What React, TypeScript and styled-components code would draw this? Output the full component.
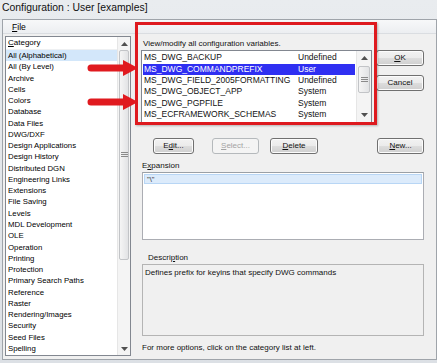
import React from "react";
import styled, { createGlobalStyle } from "styled-components";

const GlobalStyle = createGlobalStyle`
  html, body { margin: 0; padding: 0; background: #dfe3e8; }
  body { font-family: "Liberation Sans", Arial, sans-serif; color: #000; }
  * { box-sizing: border-box; }
`;

const Window = styled.div`
  position: relative;
  width: 437px;
  height: 363px;
  background: linear-gradient(#e9ecef, #dce0e5);
  display: flex;
  flex-direction: column;
  overflow: hidden;
`;

const TitleBar = styled.div`
  height: 19px;
  padding: 1px 0 0 2px;
  font-size: 10.4px;
  line-height: 14px;
  color: #111;
`;

const Client = styled.div`
  margin-left: 2px;
  width: 435px;
  height: 341px;
  background: #f0f0f0;
  border: 1px solid #9fa4aa;
  display: flex;
  flex-direction: column;
`;

const MenuBar = styled.div`
  height: 14px;
  padding-left: 9px;
  font-size: 8.6px;
  line-height: 14px;
  background: linear-gradient(#f7f8f9, #eceef1);
  border-bottom: 1px solid #dadde1;
`;

const Body = styled.div`
  flex: 1;
  display: flex;
  padding: 2px 0 0 2px;
`;

const CategoryBox = styled.div`
  width: 126px;
  height: 320px;
  background: #fff;
  border: 1px solid #828790;
  display: flex;
`;

const CategoryItems = styled.div`
  flex: 1;
  display: flex;
  flex-direction: column;
`;

const CategoryHeader = styled.div`
  height: 13px;
  padding-left: 2px;
  font-size: 8px;
  line-height: 12px;
  border-bottom: 1px solid #eef0f2;
`;

const CategoryRow = styled.div<{ $selected?: boolean }>`
  height: 11.27px;
  padding-left: 2px;
  font-size: 7.8px;
  line-height: 11.27px;
  white-space: nowrap;
  background: ${(p) => (p.$selected ? "#d3e7fa" : "transparent")};
`;

const ScrollBar = styled.div<{ $w: number }>`
  width: ${(p) => p.$w}px;
  display: flex;
  flex-direction: column;
  background: #f4f4f4;
  border-left: 1px solid #e6e6e6;
`;

const ScrollArrowBox = styled.div<{ $h: number }>`
  height: ${(p) => p.$h}px;
  display: flex;
  align-items: center;
  justify-content: center;
`;

const Thumb = styled.div<{ $h: number; $top: number }>`
  margin: ${(p) => p.$top}px 1px 0;
  height: ${(p) => p.$h}px;
  border: 1px solid #c2c4c7;
  border-radius: 2px;
  background: linear-gradient(to right, #f5f5f5, #e2e3e5);
  display: flex;
  align-items: center;
  justify-content: center;
`;

const Track = styled.div`
  flex: 1;
`;

const RightPane = styled.div`
  margin-left: 10px;
  padding-top: 1px;
  display: flex;
  flex-direction: column;
`;

const TopRow = styled.div`
  display: flex;
  align-items: flex-start;
`;

const VarsColumn = styled.div`
  width: 231px;
  display: flex;
  flex-direction: column;
`;

const Label = styled.div<{ $indent?: number }>`
  height: 13px;
  padding-left: ${(p) => p.$indent ?? 2}px;
  font-size: 8px;
  line-height: 13px;
  white-space: nowrap;
  color: #111;
`;

const VarList = styled.div`
  height: 73px;
  background: #fff;
  border: 1px solid #828790;
  display: flex;
`;

const VarRows = styled.div`
  flex: 1;
  padding: 1.4px 1px 0 1px;
  display: flex;
  flex-direction: column;
`;

const VarRow = styled.div<{ $selected?: boolean }>`
  height: 11.3px;
  display: flex;
  font-size: 8.5px;
  line-height: 11.3px;
  white-space: nowrap;
  background: ${(p) => (p.$selected ? "#2f2ff2" : "transparent")};
  color: ${(p) => (p.$selected ? "#fff" : "#111")};
`;

const VarName = styled.span`
  width: 155px;
  padding-left: 1px;
`;

const VarValue = styled.span`
  flex: 1;
`;

const SideButtons = styled.div`
  margin-left: 4px;
  padding-top: 13px;
  display: flex;
  flex-direction: column;
  gap: 9px;
`;

const Button = styled.div<{ $w: number; $ml?: number; $disabled?: boolean }>`
  width: ${(p) => p.$w}px;
  height: 16px;
  margin-left: ${(p) => (p.$ml === undefined ? 0 : `${p.$ml}px`)};
  border: 1px solid ${(p) => (p.$disabled ? "#b5b9bc" : "#707070")};
  border-radius: 3px;
  background: ${(p) =>
    p.$disabled
      ? "#f4f4f4"
      : "linear-gradient(#f2f2f2 0%, #ebebeb 50%, #dddddd 51%, #cfcfcf 100%)"};
  box-shadow: inset 0 0 0 1px ${(p) => (p.$disabled ? "#f4f4f4" : "#fcfcfc")};
  font-size: 8px;
  line-height: 14px;
  text-align: center;
  color: ${(p) => (p.$disabled ? "#a3a3a3" : "#111")};
`;

const ActionRow = styled.div`
  margin-top: 15px;
  width: 283px;
  display: flex;
  & > :last-child {
    margin-left: auto;
  }
`;

const ExpansionBox = styled.div`
  margin-left: 1px;
  width: 282px;
  height: 68px;
  background: #fff;
  border: 1px solid #abadb3;
  border-top-color: #9aa0a6;
  padding: 1px;
`;

const ExpansionRow = styled.div`
  height: 10px;
  padding-left: 2px;
  font-size: 7.5px;
  line-height: 9px;
  background: #dcebfb;
  border: 1px solid #b8d6f5;
  color: #333;
`;

const DescriptionBox = styled.div`
  margin-left: 1px;
  width: 282px;
  height: 72px;
  background: #f0f0f0;
  border: 1px solid #b4b4b4;
  padding: 2px 2px;
  font-size: 8px;
  line-height: 11px;
  color: #111;
`;

const Footer = styled.div`
  margin-top: 6px;
  padding-left: 1px;
  font-size: 8px;
  line-height: 12px;
  color: #111;
`;

const RedFrame = styled.div`
  position: absolute;
  left: 135px;
  top: 22px;
  width: 242px;
  height: 103px;
  border: 3px solid #de1a1f;
  box-shadow: 1px 1px 2px rgba(0, 0, 0, 0.25);
  pointer-events: none;
`;

const ArrowWrap = styled.svg<{ $top: number }>`
  position: absolute;
  left: 87px;
  top: ${(p) => p.$top}px;
`;

const Spacer = styled.div<{ $h: number }>`
  height: ${(p) => p.$h}px;
`;

const categories = [
  "All (Alphabetical)",
  "All (By Level)",
  "Archive",
  "Cells",
  "Colors",
  "Database",
  "Data Files",
  "DWG/DXF",
  "Design Applications",
  "Design History",
  "Distributed DGN",
  "Engineering Links",
  "Extensions",
  "File Saving",
  "Levels",
  "MDL Development",
  "OLE",
  "Operation",
  "Printing",
  "Protection",
  "Primary Search Paths",
  "Reference",
  "Raster",
  "Rendering/Images",
  "Security",
  "Seed Files",
  "Spelling",
];

const variables = [
  { name: "MS_DWG_BACKUP", level: "Undefined" },
  { name: "MS_DWG_COMMANDPREFIX", level: "User", selected: true },
  { name: "MS_DWG_FIELD_2005FORMATTING", level: "Undefined" },
  { name: "MS_DWG_OBJECT_APP", level: "System" },
  { name: "MS_DWG_PGPFILE", level: "System" },
  { name: "MS_ECFRAMEWORK_SCHEMAS", level: "System" },
];

const UpGlyph = () => (
  <svg width="7" height="4" viewBox="0 0 7 4">
    <path d="M0 4 L3.5 0 L7 4 Z" fill="#505050" />
  </svg>
);

const DownGlyph = () => (
  <svg width="7" height="4" viewBox="0 0 7 4">
    <path d="M0 0 L3.5 4 L7 0 Z" fill="#505050" />
  </svg>
);

const Grip = () => (
  <svg width="7" height="6" viewBox="0 0 7 6">
    <path d="M0 0.5 H7 M0 2.5 H7 M0 4.5 H7" stroke="#8a8a8a" strokeWidth="1" />
  </svg>
);

const RedArrow = ({ top }: { top: number }) => (
  <ArrowWrap $top={top} width="52" height="18" viewBox="0 0 52 18">
    <path
      d="M4 5.5 H36 V1 L51 9 L36 17 V12.5 H4 A3.5 3.5 0 0 1 4 5.5 Z"
      fill="#e01a1f"
    />
  </ArrowWrap>
);

const App: React.FC = () => {
  return (
    <>
      <GlobalStyle />
      <Window>
        <TitleBar>Configuration : User [examples]</TitleBar>
        <Client>
          <MenuBar>
            <u>F</u>ile
          </MenuBar>
          <Body>
            <CategoryBox>
              <CategoryItems>
                <CategoryHeader>
                  <u>C</u>ategory
                </CategoryHeader>
                {categories.map((c, i) => (
                  <CategoryRow key={c} $selected={i === 0}>
                    {c}
                  </CategoryRow>
                ))}
              </CategoryItems>
              <ScrollBar $w={13}>
                <ScrollArrowBox $h={13}>
                  <UpGlyph />
                </ScrollArrowBox>
                <Thumb $top={0} $h={210}>
                  <Grip />
                </Thumb>
                <Track />
                <ScrollArrowBox $h={13}>
                  <DownGlyph />
                </ScrollArrowBox>
              </ScrollBar>
            </CategoryBox>

            <RightPane>
              <TopRow>
                <VarsColumn>
                  <Label>View/modify all configuration variables.</Label>
                  <VarList>
                    <VarRows>
                      {variables.map((v) => (
                        <VarRow key={v.name} $selected={v.selected}>
                          <VarName>{v.name}</VarName>
                          <VarValue>{v.level}</VarValue>
                        </VarRow>
                      ))}
                    </VarRows>
                    <ScrollBar $w={15}>
                      <ScrollArrowBox $h={14}>
                        <UpGlyph />
                      </ScrollArrowBox>
                      <Thumb $top={1} $h={27}>
                        <Grip />
                      </Thumb>
                      <Track />
                      <ScrollArrowBox $h={14}>
                        <DownGlyph />
                      </ScrollArrowBox>
                    </ScrollBar>
                  </VarList>
                </VarsColumn>
                <SideButtons>
                  <Button $w={48}>
                    <u>O</u>K
                  </Button>
                  <Button $w={48}>Cancel</Button>
                </SideButtons>
              </TopRow>

              <ActionRow>
                <Button $w={41} $ml={12}>
                  E<u>d</u>it...
                </Button>
                <Button $w={47} $ml={18} $disabled>
                  <u>S</u>elect...
                </Button>
                <Button $w={48} $ml={11}>
                  <u>D</u>elete
                </Button>
                <Button $w={47}>
                  <u>N</u>ew...
                </Button>
              </ActionRow>

              <Spacer $h={5} />
              <Label $indent={1}>
                E<u>x</u>pansion
              </Label>
              <ExpansionBox>
                <ExpansionRow>"\"</ExpansionRow>
              </ExpansionBox>

              <Spacer $h={11} />
              <Label $indent={7}>
                Descri<u>p</u>tion
              </Label>
              <DescriptionBox>
                Defines prefix for keyins that specify DWG commands
              </DescriptionBox>
              <Footer>For more options, click on the category list at left.</Footer>
            </RightPane>
          </Body>
        </Client>

        <RedFrame />
        <RedArrow top={59} />
        <RedArrow top={93} />
      </Window>
    </>
  );
};

export default App;
